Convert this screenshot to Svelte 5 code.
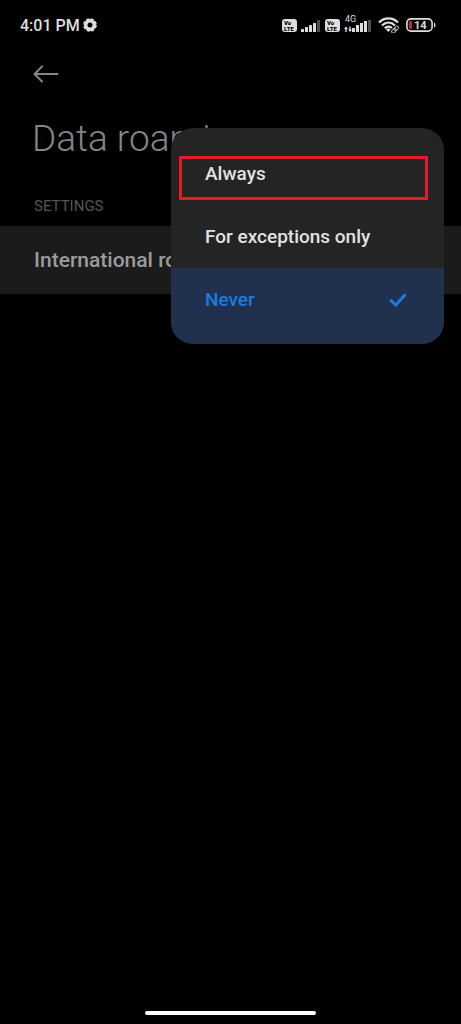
<script>
  let selected = $state('Never');
  const options = ['Always', 'For exceptions only', 'Never'];
  const bars = [3, 5, 7, 9, 12];
</script>

{#snippet volte()}
  <svg class="volte" viewBox="0 0 15 13" role="img" aria-label="VoLTE">
    <rect width="15" height="13" rx="3" fill="#dedede" />
    <text x="2" y="6" class="tiny">Vo</text>
    <text x="2" y="12" class="tiny">LTE</text>
  </svg>
{/snippet}

{#snippet signal(dim)}
  <svg class="signal" viewBox="0 0 20 13" aria-hidden="true">
    {#each bars as h, i}
      <rect x={i * 4} y={13 - h} width="3" height={h} rx="0.5" fill={i >= dim ? '#505050' : '#dedede'} />
    {/each}
  </svg>
{/snippet}

<div class="screen">
  <div class="status">
    <span class="time">4:01 PM</span>
    <svg class="gear" viewBox="0 0 14 14" aria-hidden="true">
      <g fill="none" stroke="#dedede">
        <circle cx="7" cy="7" r="4.200" stroke-width="3.400" />
        <circle cx="7" cy="7" r="5.700" stroke-width="2.200" stroke-dasharray="3 1.477" />
      </g>
    </svg>
    <div class="indicators">
      {@render volte()}
      {@render signal(4)}
      {@render volte()}
      <svg class="mobile" viewBox="0 0 28 19" role="img" aria-label="4G signal">
        <text x="1" y="8" class="net">4G</text>
        <path d="M0 15 2 12.500 4 15H2.700V18H1.300V15ZM4 15.500H5.300V12.500H6.700V15.500H8L6 18Z" fill="#dedede" />
        <rect x="8" y="14" width="3" height="4" fill="#dedede" />
        <rect x="12" y="11" width="3" height="7" fill="#dedede" />
        <rect x="16" y="9" width="3" height="9" fill="#dedede" />
        <rect x="20" y="7" width="3" height="11" fill="#dedede" />
        <rect x="24" y="6" width="3" height="12" fill="#505050" />
      </svg>
      <svg class="wifi" viewBox="0 0 22 16" aria-hidden="true">
        <g fill="none" stroke="#dedede" stroke-width="2.300">
          <path d="M1 5.500C6.500 0 14.500 0 20 5.500" />
          <path d="M4 8.500C8 4.700 13 4.700 17 8.500" />
          <path d="M6.800 11.300C9 9 12 9 14 11" />
        </g>
        <path d="M8 12.500Q10.500 10.500 12.500 12.500L10.500 15Z" fill="#dedede" />
        <g fill="none" stroke="#a8a8a8" stroke-width="1.100" transform="rotate(-45 17 12.500)">
          <rect x="12.800" y="11" width="5" height="3.200" rx="1.600" />
          <rect x="16.200" y="11" width="5" height="3.200" rx="1.600" />
        </g>
      </svg>
      <svg class="battery" viewBox="0 0 30 14" role="img" aria-label="Battery 14%">
        <rect x="0.900" y="0.900" width="25.200" height="12.200" rx="4" fill="none" stroke="#dedede" stroke-width="1.600" />
        <rect x="3" y="3" width="3" height="8" rx="1" fill="#c9252c" />
        <path d="M28 4.500Q29.500 5 29.500 7T28 9.500Z" fill="#dedede" />
        <text x="8" y="11" class="charge">14</text>
      </svg>
    </div>
  </div>

  <header>
    <button class="back" aria-label="Back">
      <svg viewBox="0 0 26 18" fill="none" stroke="#858585" stroke-width="2" stroke-linecap="round" stroke-linejoin="round">
        <path d="M24.500 9H1.500M9 1.500 1.500 9 9 16.500" />
      </svg>
    </button>
    <h1>Data roaming</h1>
  </header>

  <main>
    <h2>SETTINGS</h2>
    <div class="setting">
      <button class="row">International roaming</button>
      <div class="menu" role="listbox" aria-label="International roaming">
        {#each options as option}
          <button
            class="option"
            class:selected={selected === option}
            role="option"
            aria-selected={selected === option}
            onclick={() => (selected = option)}
          >
            <span>{option}</span>
            {#if selected === option}
              <svg class="check" viewBox="0 0 18 14" fill="none" stroke="#1c7be0" stroke-width="3">
                <path d="M1.200 6.800 6.800 12 16.500 1.200" />
              </svg>
            {/if}
          </button>
        {/each}
        <div class="highlight"></div>
      </div>
    </div>
  </main>

  <div class="home"></div>
</div>

<style>
  :global(body) {
    background: #000;
  }
  .screen {
    min-height: 100vh;
    display: flex;
    flex-direction: column;
    background: #000;
    font-family: Roboto, "Liberation Sans", sans-serif;
    overflow: hidden;
  }
  svg {
    display: block;
    flex: none;
  }
  button {
    font: inherit;
    border: 0;
    margin: 0;
    background: none;
    text-align: left;
  }
  h1,
  h2 {
    margin: 0;
  }
  .status {
    display: flex;
    align-items: center;
    height: 50px;
    padding: 0 25px 0 20px;
    color: #dedede;
  }
  .time {
    font-size: 16px;
    font-weight: 500;
  }
  .gear {
    width: 14px;
    height: 14px;
    margin-left: 3px;
  }
  .indicators {
    display: flex;
    align-items: center;
    gap: 4px;
    margin-left: auto;
  }
  .volte {
    width: 15px;
    height: 13px;
  }
  .signal {
    width: 20px;
    height: 13px;
  }
  .mobile {
    width: 28px;
    height: 19px;
    margin-bottom: 4px;
  }
  .wifi {
    width: 22px;
    height: 16px;
    margin-left: 2px;
  }
  .battery {
    width: 30px;
    height: 14px;
    margin-left: 2px;
  }
  .tiny {
    font-size: 6px;
    font-weight: 900;
    fill: #000;
  }
  .net {
    font-size: 9px;
    fill: #dedede;
  }
  .charge {
    font-size: 11px;
    font-weight: 700;
    fill: #dedede;
  }
  header {
    padding: 15px 32px 0;
  }
  .back {
    display: block;
    padding: 0 1px;
  }
  .back svg {
    width: 26px;
    height: 18px;
  }
  h1 {
    margin-top: 33px;
    font-size: 37px;
    line-height: 46px;
    font-weight: 300;
    color: #858585;
  }
  h2 {
    padding: 34px 34px 10px;
    font-size: 15px;
    line-height: 20px;
    font-weight: 400;
    color: #555;
  }
  .setting {
    position: relative;
  }
  .row {
    display: block;
    width: 100%;
    padding: 20px 34px;
    font-size: 21px;
    line-height: 28px;
    font-weight: 500;
    color: #9b9b9b;
    background: #1b1b1b;
  }
  .menu {
    position: absolute;
    top: -98px;
    right: 17px;
    width: 273px;
    box-sizing: border-box;
    padding-top: 14px;
    border-radius: 22px;
    background: #242424;
    overflow: hidden;
  }
  .option {
    display: flex;
    align-items: center;
    justify-content: space-between;
    width: 100%;
    padding: 20px 37px 19px 34px;
    font-size: 19px;
    line-height: 24px;
    font-weight: 500;
    color: #e2e2e2;
  }
  .option:last-of-type {
    padding-bottom: 32px;
  }
  .option.selected {
    color: #1c7be0;
    background: #20304d;
  }
  .check {
    width: 18px;
    height: 14px;
  }
  .highlight {
    position: absolute;
    top: 28px;
    left: 8px;
    right: 16px;
    height: 38px;
    border: 3px solid #e51c23;
    pointer-events: none;
  }
  .home {
    width: 37%;
    height: 4px;
    margin: auto auto 9px;
    border-radius: 2px;
    background: #fff;
  }
</style>
